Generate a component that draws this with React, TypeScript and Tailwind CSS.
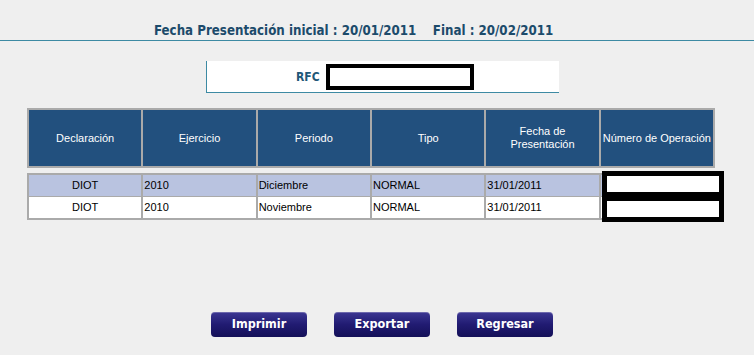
import React from 'react';

type Row = {
  declaracion: string;
  ejercicio: string;
  periodo: string;
  tipo: string;
  fecha: string;
};

const rows: Row[] = [
  { declaracion: 'DIOT', ejercicio: '2010', periodo: 'Diciembre', tipo: 'NORMAL', fecha: '31/01/2011' },
  { declaracion: 'DIOT', ejercicio: '2010', periodo: 'Noviembre', tipo: 'NORMAL', fecha: '31/01/2011' },
];

const headers = ['Declaración', 'Ejercicio', 'Periodo', 'Tipo', 'Fecha de Presentación', 'Número de Operación'];

function NavButton({ label }: { label: string }) {
  return (
    <button
      type="button"
      className="w-[96px] h-[25px] rounded-[4px] bg-gradient-to-b from-[#3d3793] via-[#211b72] to-[#141058] text-white text-[12.5px] font-bold shadow-[inset_0_1px_0_rgba(255,255,255,0.25)] [font-family:'DejaVu_Sans_Condensed','DejaVu_Sans',sans-serif]"
    >
      {label}
    </button>
  );
}

export default function App() {
  return (
    <div className="w-[754px] h-[355px] overflow-hidden bg-[#efefef] [font-family:'Liberation_Sans',Arial,sans-serif]">
      {/* encabezado */}
      <div className="pt-[23px] border-b border-[#3d8aa3]">
        <div className="h-[17px] pl-[154px] text-[13.2px] font-bold text-[#1c4b6b] [font-family:'DejaVu_Sans_Condensed','DejaVu_Sans',sans-serif] leading-[16px] whitespace-nowrap">
          Fecha Presentación inicial : 20/01/2011&nbsp;&nbsp;&nbsp;&nbsp;Final : 20/02/2011
        </div>
      </div>

      {/* RFC */}
      <div className="mt-[20px] ml-[206px] w-[353px] h-[32px] bg-white border-l border-b border-[#3d8aa3] flex items-center pl-[89px]">
        <span className="text-[12px] font-bold text-[#1f5878] [font-family:'DejaVu_Sans_Condensed','DejaVu_Sans',sans-serif]">
          RFC
        </span>
        <div className="ml-[6px] w-[148px] h-[26px] bg-white border-[4px] border-black" />
      </div>

      {/* tabla */}
      <div className="mt-[15px] ml-[27px] w-[688px]">
        <div className="grid grid-cols-6 gap-[2px] bg-[#aaaaaa] p-[2px]">
          {headers.map((h) => (
            <div
              key={h}
              className="h-[56px] bg-[#22507e] text-white text-[11px] leading-[13px] flex items-center justify-center text-center px-[2px]"
            >
              {h === 'Fecha de Presentación' ? (
                <span>
                  Fecha de
                  <br />
                  Presentación
                </span>
              ) : (
                h
              )}
            </div>
          ))}
        </div>

        <div className="mt-[5px] grid grid-cols-6 gap-x-[2px] gap-y-[1px] bg-[#aaaaaa] p-[2px]">
          {rows.map((r, i) => {
            const bg = i === 0 ? 'bg-[#b9c3e0]' : 'bg-white';
            return (
              <React.Fragment key={i}>
                <div className={`${bg} h-[21px] text-[11px] flex items-center justify-center`}>{r.declaracion}</div>
                <div className={`${bg} h-[21px] text-[11px] flex items-center pl-[1px]`}>{r.ejercicio}</div>
                <div className={`${bg} h-[21px] text-[11px] flex items-center pl-[1px]`}>{r.periodo}</div>
                <div className={`${bg} h-[21px] text-[11px] flex items-center pl-[1px]`}>{r.tipo}</div>
                <div className={`${bg} h-[21px] text-[11px] flex items-center pl-[1px]`}>{r.fecha}</div>
                <div className={`${bg} h-[21px] relative`}>
                  <div
                    className={`absolute left-[1px] w-[122px] h-[26px] bg-white border-[5px] border-black ${
                      i === 0 ? 'top-[-4px]' : 'top-[-1px]'
                    }`}
                  />
                </div>
              </React.Fragment>
            );
          })}
        </div>
      </div>

      {/* botones */}
      <div className="mt-[92px] ml-[211px] flex gap-[27px]">
        <NavButton label="Imprimir" />
        <NavButton label="Exportar" />
        <NavButton label="Regresar" />
      </div>
    </div>
  );
}
